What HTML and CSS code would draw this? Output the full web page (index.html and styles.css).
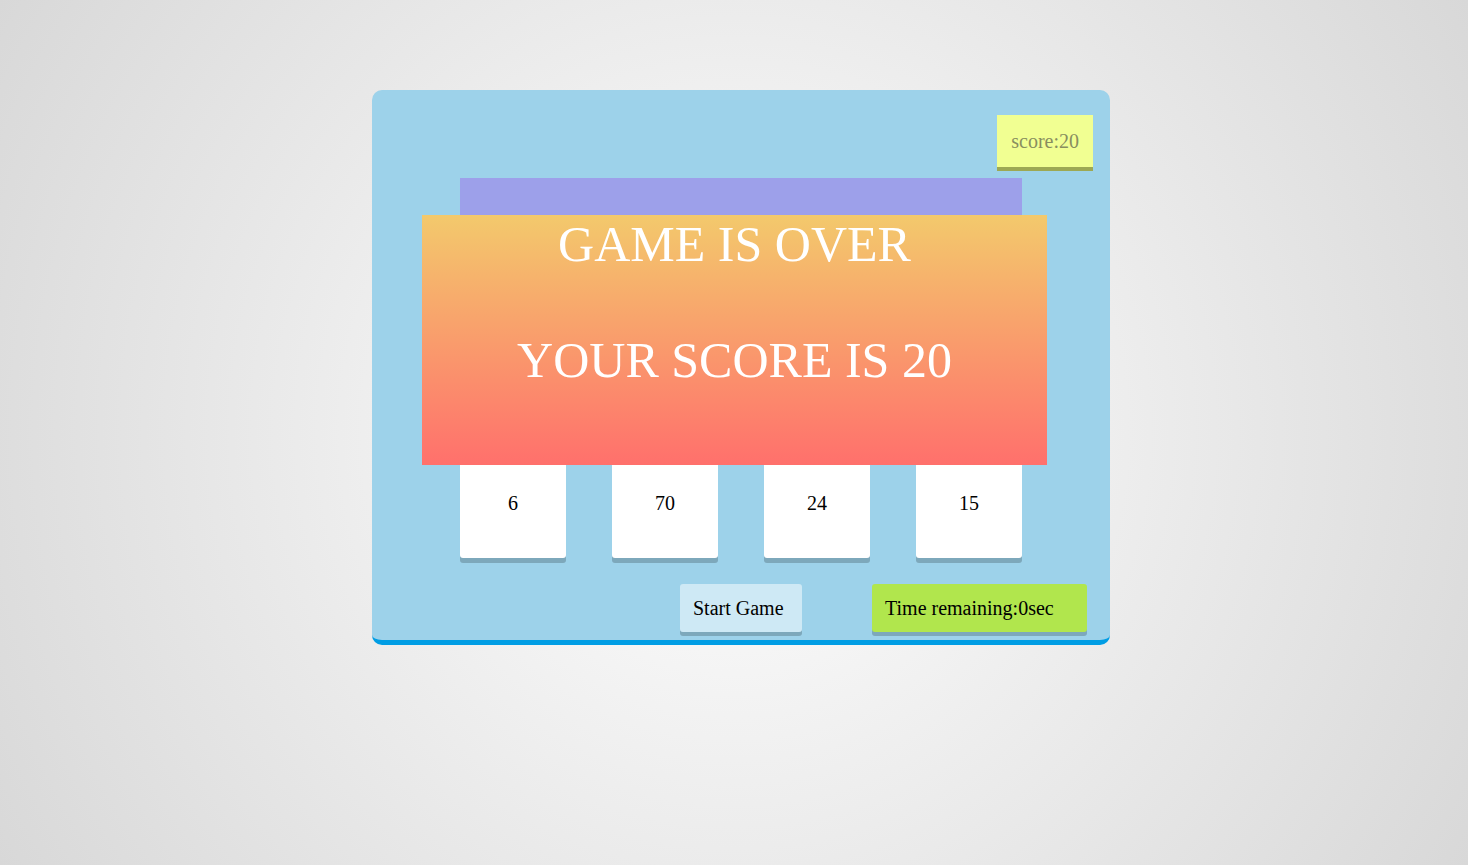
FILE: index.html
```html
<!DOCTYPE html>
<html lang="en">
  <head>
    <meta charset="UTF-8" />
    <meta name="viewport" content="width=device-width, initial-scale=1.0" />
    <title>Multiplication Game</title>
    <link rel="stylesheet" href="styles.css">
  </head>
  <body>
    <div class="container">
      <div class="score-row">
        <div class="score">score:<span id="scorevalue">20</span></div>
      </div>

      <div class="question" id="question"></div>

      <div class="choices">
        <div class="box" id="box1">6</div>
        <div class="box" id="box2">70</div>
        <div class="box" id="box3">24</div>
        <div class="box" id="box4">15</div>
      </div>

      <div class="controls">
        <div class="start-btn" id="startreset">Start Game</div>
        <div class="time-remaining" id="timeremaining">
          Time remaining:<span id="timeremainingvalue">0</span>sec
        </div>
      </div>

      <div class="game-over" id="gameOver">
        <p>Game is over</p>
        <p>Your score is 20</p>
      </div>
    </div>
  </body>
</html>
```

FILE: styles.css
```css
html {
  height: 100%;
  background: radial-gradient(circle, #ffffff, #d8d8d8);
}
body {
  margin: 0;
  font-family: "Liberation Serif", "Times New Roman", serif;
}
.container {
  position: relative;
  box-sizing: border-box;
  width: 738px;
  height: 555px;
  margin: 90px 0 0 calc(50% - 362px);
  padding-top: 25px;
  background-color: #9dd2ea;
  border-bottom: 5px solid #009de4;
  border-radius: 10px;
}
.score-row {
  display: flex;
  justify-content: flex-end;
  padding-right: 17px;
}
.score {
  padding: 15px 14px;
  line-height: 22px;
  font-size: 20px;
  background-color: #f1ff92;
  color: #888e5f;
  box-shadow: 0 4px #9da853;
}
.question {
  width: 562px;
  height: 230px;
  margin: 11px auto 0;
  background-color: #9da0ea;
  box-shadow: 0 4px #787acb;
}
.choices {
  display: flex;
  justify-content: space-between;
  width: 562px;
  margin: 40px auto 0;
}
.box {
  width: 106px;
  height: 110px;
  line-height: 110px;
  text-align: center;
  font-size: 20px;
  background-color: white;
  border-radius: 3px;
  box-shadow: 0 5px rgba(0, 0, 0, 0.2);
}
.controls {
  display: flex;
  justify-content: flex-end;
  gap: 70px;
  margin-top: 26px;
  padding-right: 23px;
}
.start-btn,
.time-remaining {
  box-sizing: border-box;
  height: 48px;
  line-height: 48px;
  padding: 0 13px;
  font-size: 20px;
  border-radius: 3px;
  box-shadow: 0 4px rgba(0, 0, 0, 0.2);
  cursor: pointer;
}
.start-btn {
  width: 122px;
  background-color: rgba(255, 255, 255, 0.5);
}
.time-remaining {
  width: 215px;
  background-color: #b1e64d;
}
.game-over {
  position: absolute;
  top: 125px;
  left: 50px;
  width: 625px;
  height: 250px;
  background: linear-gradient(#f3c96c, #ff706c);
  color: white;
  font-size: 50px;
  line-height: 58px;
  text-align: center;
  text-transform: uppercase;
}
.game-over p {
  margin: 0;
}
.game-over p + p {
  margin-top: 58px;
}
```
